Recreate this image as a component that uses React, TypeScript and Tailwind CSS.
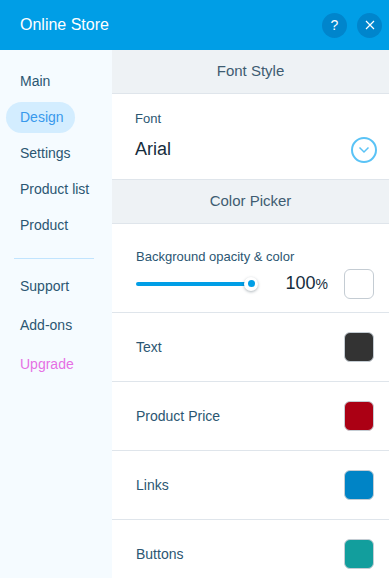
import React from 'react';

const navTop = ['Main', 'Design', 'Settings', 'Product list', 'Product'];
const navBottom = ['Support', 'Add-ons'];

const colorRows = [
  { label: 'Text', color: 'bg-[#333333]' },
  { label: 'Product Price', color: 'bg-[#ab0014]' },
  { label: 'Links', color: 'bg-[#0084c6]' },
  { label: 'Buttons', color: 'bg-[#129e9d]' },
];

function SectionHeader({ title }: { title: string }) {
  return (
    <div className="flex h-[44px] items-center justify-center border-b border-[#dfe5eb] bg-[#eef2f5] text-[15px] text-[#3e5c71]">
      {title}
    </div>
  );
}

export default function App() {
  return (
    <div
      className="flex h-[578px] w-[389px] flex-col overflow-hidden bg-white"
      style={{ fontFamily: '"Liberation Sans", Arial, sans-serif' }}
    >
      {/* ── Header ─────────────────────────────── */}
      <div className="flex h-[50px] shrink-0 items-center bg-[#009ee6] pl-5 pr-[7px]">
        <span className="flex-1 text-[16px] text-white">Online Store</span>
        <button className="flex h-[25px] w-[25px] items-center justify-center rounded-full bg-[#0085cc] text-[14px] text-white">
          ?
        </button>
        <button className="ml-[10px] flex h-[25px] w-[25px] items-center justify-center rounded-full bg-[#0085cc] text-white">
          <svg width="10" height="10" viewBox="0 0 10 10" fill="none" stroke="currentColor" strokeWidth="1.2">
            <path d="M1 1l8 8M9 1l-8 8" />
          </svg>
        </button>
      </div>

      <div className="flex min-h-0 flex-1">
        {/* ── Sidebar ─────────────────────────── */}
        <div className="w-[112px] shrink-0 bg-[#f5fbff] pt-[13px]">
          <div className="flex flex-col">
            {navTop.map((item) => (
              <div key={item} className="flex h-[36px] items-center px-[6px]">
                <span
                  className={`flex h-[31px] items-center rounded-full px-[14px] text-[14px] ${
                    item === 'Design' ? 'w-[69px] bg-[#d3edff] text-[#3899ec]' : 'text-[#2b5672]'
                  }`}
                >
                  {item}
                </span>
              </div>
            ))}
          </div>
          <div className="mx-[14px] mt-[15px] mb-[8px] h-px w-[80px] bg-[#c1e4fe]" />
          {navBottom.map((item) => (
            <div key={item} className="flex h-[39px] items-center pl-[20px] text-[14px] text-[#2b5672]">
              {item}
            </div>
          ))}
          <div className="flex h-[39px] items-center pl-[20px] text-[14px] text-[#e570e4]">Upgrade</div>
        </div>

        {/* ── Main panel ──────────────────────── */}
        <div className="flex-1 bg-white">
          <SectionHeader title="Font Style" />
          <div className="flex h-[86px] items-end border-b border-[#dfe5eb] pb-[16px] pl-[23px] pr-[12px]">
            <div className="flex-1">
              <div className="text-[13px] text-[#2b5672]">Font</div>
              <div className="mt-[8px] text-[18px] text-[#162d3d]">Arial</div>
            </div>
            <div className="flex h-[26px] w-[26px] items-center justify-center rounded-full border-2 border-[#5ac3f6]">
              <svg width="12" height="8" viewBox="0 0 12 8" fill="none" stroke="#5ac3f6" strokeWidth="1.5">
                <path d="M1.5 1.5l4.5 4.5 4.5-4.5" />
              </svg>
            </div>
          </div>

          <SectionHeader title="Color Picker" />
          <div className="flex h-[89px] flex-col border-b border-[#dfe5eb] pl-[24px] pr-[15px] pt-[23px]">
            <div className="text-[13px] text-[#2b5672]">Background opacity &amp; color</div>
            <div className="mt-[2px] flex items-center">
              <div className="relative h-[4px] w-[115px] rounded-full bg-[#009ee6]">
                <div className="absolute right-[-7px] top-[-5px] flex h-[14px] w-[14px] items-center justify-center rounded-full bg-white shadow-[0_1px_3px_rgba(22,45,61,0.35)]">
                  <div className="h-[7px] w-[7px] rounded-full bg-[#009ee6]" />
                </div>
              </div>
              <div className="ml-auto flex items-baseline text-[#162d3d]">
                <span className="text-[18px]">100</span>
                <span className="text-[14px]">%</span>
              </div>
              <div className="ml-[16px] h-[30px] w-[30px] rounded-[6px] border border-[#c4ccd3] bg-white" />
            </div>
          </div>

          {colorRows.map((row) => (
            <div
              key={row.label}
              className="flex h-[69px] items-center border-b border-[#dfe5eb] pl-[24px] pr-[15px]"
            >
              <span className="flex-1 text-[14px] text-[#2b5672]">{row.label}</span>
              <div className={`h-[30px] w-[30px] rounded-[6px] border border-[#c4ccd3] ${row.color}`} />
            </div>
          ))}
        </div>
      </div>
    </div>
  );
}
